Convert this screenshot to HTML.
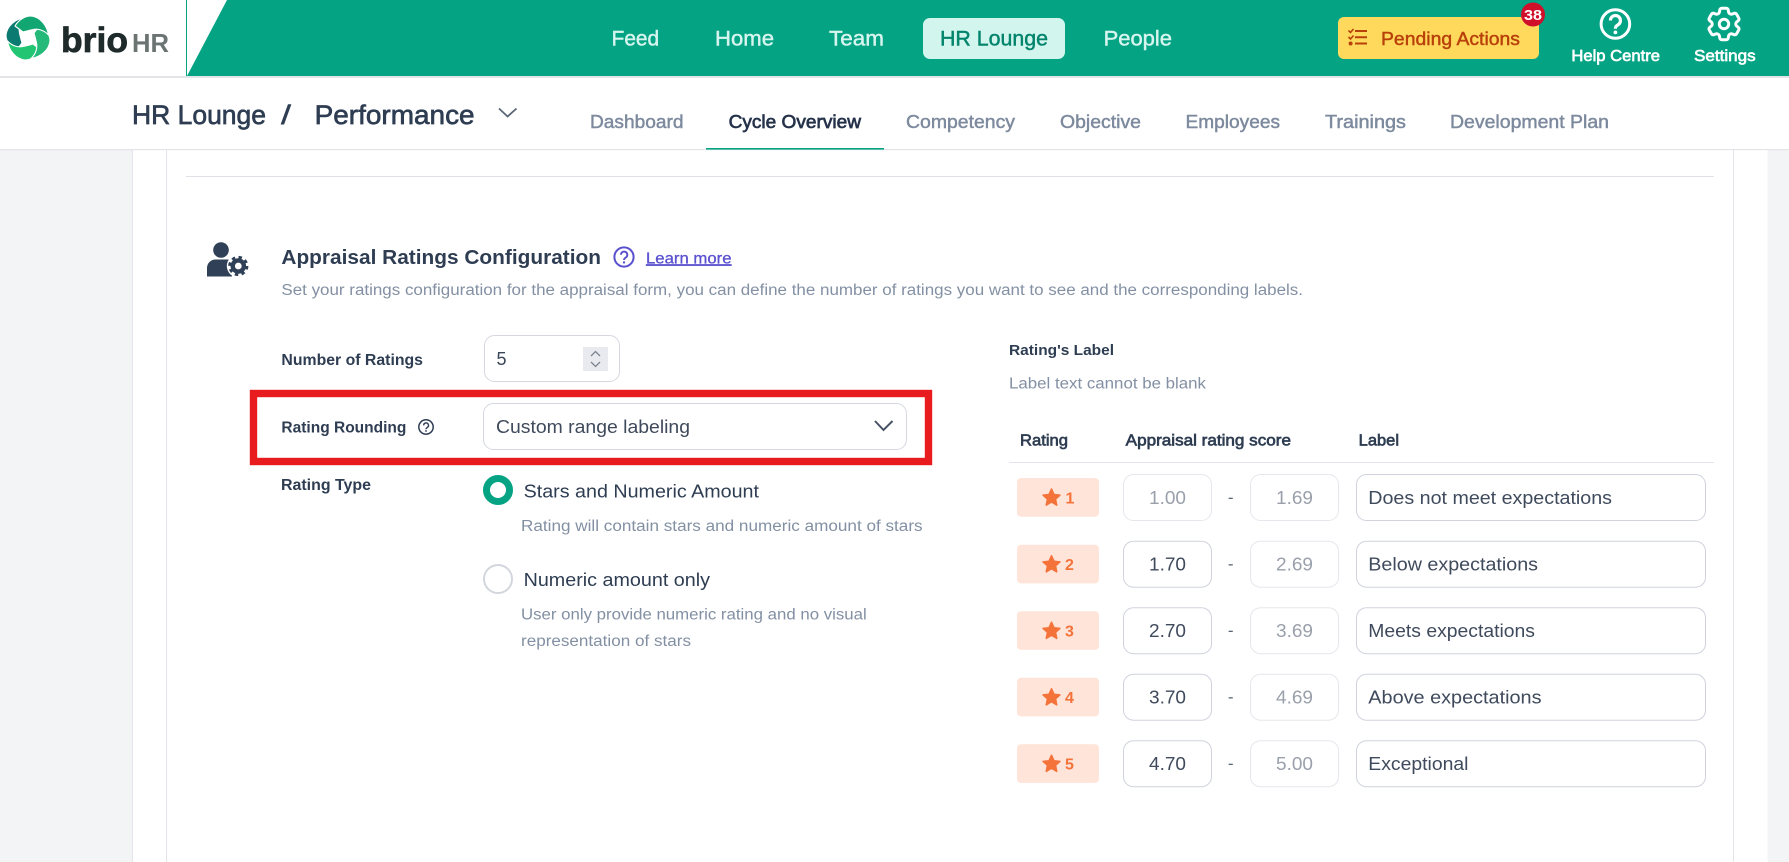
<!DOCTYPE html>
<html lang="en"><head><meta charset="utf-8"><title>HR Lounge - Performance</title>
<style>
html,body{margin:0;padding:0;background:#f3f4f6;width:1789px;height:862px;overflow:hidden}
svg{display:block;font-family:"Liberation Sans",Arial,sans-serif}
.m{stroke-width:.45px}
.b{stroke-width:.65px}
</style></head><body>
<svg xmlns="http://www.w3.org/2000/svg" width="1789" height="862" viewBox="0 0 1789 862">
<defs>
<polygon id="star" points="0,-8.4 2.5,-2.9 8.4,-2.3 4,1.6 5.2,7.6 0,4.5 -5.2,7.6 -4,1.6 -8.4,-2.3 -2.5,-2.9" fill="#f4733a" stroke="#f4733a" stroke-width="1.6" stroke-linejoin="round"/>
<path id="blade" d="M-5,-6L-13,-12C-9,-19 -2,-22 3,-22C12,-21 19,-13 20.5,-3C16,-8 10,-9.5 5,-8.5C1,-7.7 -3,-6.5 -5,-6Z" stroke="#fff" stroke-width="1.1" stroke-linejoin="round"/>
</defs>
<!-- page background -->
<rect width="1789" height="862" fill="#f3f4f6"/>
<rect x="133" y="150" width="1634.5" height="712" fill="#fff"/>
<path d="M132.5 150V862M166.5 150V862M1733.5 150V862" stroke="#e3e5ea" stroke-width="1" fill="none"/>
<!-- top bar -->
<rect width="1789" height="76" fill="#fff"/>
<polygon points="227,0 1789,0 1789,76 187,76" fill="#03a384"/>
<rect x="186" y="0" width="1" height="76" fill="#03a384"/>
<rect y="76" width="1789" height="2" fill="#e2e4e8"/>
<!-- logo -->
<g transform="translate(28 38)">
<use href="#blade" fill="#0b7a70" transform="rotate(270)"/>
<use href="#blade" fill="#22c672" transform="rotate(180)"/>
<use href="#blade" fill="#25b97a" transform="rotate(90)"/>
<use href="#blade" fill="#12a672"/>
</g>
<text x="61" y="52" font-size="35" font-weight="700" fill="#1f2a2a" stroke="#1f2a2a" stroke-width=".7" textLength="67" lengthAdjust="spacingAndGlyphs">brio</text>
<text x="132" y="52" font-size="26" font-weight="700" fill="#6b7472" textLength="37" lengthAdjust="spacingAndGlyphs">HR</text>
<!-- main nav -->
<g font-size="21.5" fill="#d6f5ee" stroke="#d6f5ee">
<text x="611.6" y="45.5" textLength="47.5" lengthAdjust="spacingAndGlyphs" class="m">Feed</text>
<text x="715" y="45.5" textLength="59" lengthAdjust="spacingAndGlyphs" class="m">Home</text>
<text x="829" y="45.5" textLength="55" lengthAdjust="spacingAndGlyphs" class="m">Team</text>
<text x="1103.6" y="45.5" textLength="68.4" lengthAdjust="spacingAndGlyphs" class="m">People</text>
</g>
<rect x="923" y="18" width="142" height="41" rx="7" fill="#d2f5ee"/>
<text x="940" y="45.5" font-size="21.5" fill="#03846c" stroke="#03846c" class="m" textLength="108" lengthAdjust="spacingAndGlyphs">HR Lounge</text>
<!-- pending -->
<rect x="1338" y="17" width="201" height="42" rx="6" fill="#ffd95c"/>
<g stroke="#b8400a" fill="none" stroke-width="2">
<path d="M1355 31H1367M1355 37.3H1367M1355 43.5H1367"/>
<path d="M1348.5 30.5l2 2 3-3.5M1348.5 37l2 2 3-3.5" stroke-width="1.6"/>
</g>
<circle cx="1350.6" cy="43.5" r="2" fill="#b8400a"/>
<text x="1381" y="45" font-size="18.5" fill="#b8400a" stroke="#b8400a" class="m" textLength="139" lengthAdjust="spacingAndGlyphs">Pending Actions</text>
<circle cx="1533" cy="14.5" r="12" fill="#d0102b"/>
<text x="1533" y="20" font-size="15" font-weight="700" fill="#fff" text-anchor="middle" textLength="18" lengthAdjust="spacingAndGlyphs">38</text>
<!-- help -->
<circle cx="1615.4" cy="24" r="14.3" fill="none" stroke="#fff" stroke-width="3"/>
<path d="M1610.4 20.5a5 5 0 1 1 7.9 4.1c-1.9 1.2-2.9 1.9-2.9 4.2" fill="none" stroke="#fff" stroke-width="3.2"/>
<circle cx="1615.4" cy="32.4" r="1.9" fill="#fff"/>
<text x="1571.4" y="61" font-size="16" fill="#fff" stroke="#fff" class="b" textLength="88.6" lengthAdjust="spacingAndGlyphs">Help Centre</text>
<!-- settings -->
<g transform="translate(1703 3) scale(1.75)" fill="none" stroke="#fff" stroke-width="1.7" stroke-linejoin="round" stroke-linecap="round">
<circle cx="12" cy="12" r="2.7"/>
<path d="M9.594 3.94c.09-.542.56-.94 1.11-.94h2.593c.55 0 1.02.398 1.11.94l.213 1.281c.063.374.313.686.645.87.074.04.147.083.22.127.325.196.72.257 1.075.124l1.217-.456a1.125 1.125 0 0 1 1.37.49l1.296 2.247a1.125 1.125 0 0 1-.26 1.431l-1.003.827c-.293.241-.438.613-.43.992a7.723 7.723 0 0 1 0 .255c-.008.378.137.75.43.991l1.004.827c.424.35.534.955.26 1.43l-1.298 2.247a1.125 1.125 0 0 1-1.369.491l-1.217-.456c-.355-.133-.75-.072-1.076.124a6.47 6.47 0 0 1-.22.128c-.331.183-.581.495-.644.869l-.213 1.281c-.09.543-.56.94-1.11.94h-2.594c-.55 0-1.019-.398-1.11-.94l-.213-1.281c-.062-.374-.312-.686-.644-.87a6.52 6.52 0 0 1-.22-.127c-.325-.196-.72-.257-1.076-.124l-1.217.456a1.125 1.125 0 0 1-1.369-.49l-1.297-2.247a1.125 1.125 0 0 1 .26-1.431l1.004-.827c.292-.24.437-.613.43-.991a6.932 6.932 0 0 1 0-.255c.007-.38-.138-.751-.43-.992l-1.004-.827a1.125 1.125 0 0 1-.26-1.43l1.297-2.247a1.125 1.125 0 0 1 1.37-.491l1.216.456c.356.133.751.072 1.076-.124.072-.044.146-.086.22-.128.332-.183.582-.495.644-.869l.214-1.28Z"/>
</g>
<text x="1694" y="61" font-size="16" fill="#fff" stroke="#fff" class="b" textLength="61.6" lengthAdjust="spacingAndGlyphs">Settings</text>
<!-- sub header -->
<rect y="78" width="1789" height="71" fill="#fff"/>
<rect y="149" width="1789" height="1.2" fill="#e2e4e8"/>
<g font-size="26.5" fill="#2e3d52" stroke="#2e3d52">
<text x="132" y="124" textLength="134" lengthAdjust="spacingAndGlyphs" class="b">HR Lounge</text>
<text x="281" y="124" textLength="10" lengthAdjust="spacingAndGlyphs" class="m">/</text>
<text x="314.6" y="124" textLength="160" lengthAdjust="spacingAndGlyphs" class="b">Performance</text>
</g>
<path d="M499 108.5L507.6 116.5L516.5 108.5" fill="none" stroke="#5d6878" stroke-width="1.8"/>
<g font-size="18" fill="#7d8a9e" stroke="#7d8a9e">
<text x="590" y="128" textLength="93.5" lengthAdjust="spacingAndGlyphs" class="m">Dashboard</text>
<text x="906" y="128" textLength="109" lengthAdjust="spacingAndGlyphs" class="m">Competency</text>
<text x="1060" y="128" textLength="81" lengthAdjust="spacingAndGlyphs" class="m">Objective</text>
<text x="1185.5" y="128" textLength="94.5" lengthAdjust="spacingAndGlyphs" class="m">Employees</text>
<text x="1325" y="128" textLength="81" lengthAdjust="spacingAndGlyphs" class="m">Trainings</text>
<text x="1450" y="128" textLength="159" lengthAdjust="spacingAndGlyphs" class="m">Development Plan</text>
</g>
<text x="728.6" y="128" font-size="18" fill="#25324a" stroke="#25324a" class="b" textLength="132.4" lengthAdjust="spacingAndGlyphs">Cycle Overview</text>
<rect x="706" y="148" width="178" height="1.6" fill="#03a384"/>
<!-- card divider -->
<rect x="186" y="176" width="1528" height="1" fill="#dfe1e6"/>
<!-- section icon -->
<circle cx="221" cy="250" r="7.8" fill="#2f4057"/>
<path d="M207 276.5V268c0-5 4-8.5 8.5-8.5h11c3 0 5 1 6.5 2.5L232 276.5Z" fill="#2f4057"/>
<circle cx="238.3" cy="266" r="11.5" fill="#fff"/>
<circle cx="238.3" cy="266" r="8.6" fill="none" stroke="#2f4057" stroke-width="3" stroke-dasharray="3.4 3.35"/>
<circle cx="238.3" cy="266" r="5.6" fill="none" stroke="#2f4057" stroke-width="4.4"/>
<!-- heading -->
<text x="281.4" y="264" font-size="20.5" font-weight="700" fill="#2e3d52" textLength="319.6" lengthAdjust="spacingAndGlyphs">Appraisal Ratings Configuration</text>
<circle cx="624" cy="257" r="9.6" fill="none" stroke="#5a50cf" stroke-width="2"/>
<path d="M620.9 254.8a3.2 3.2 0 1 1 4.9 2.7c-1.2.8-1.8 1.2-1.8 2.5" fill="none" stroke="#5a50cf" stroke-width="1.9"/>
<circle cx="624" cy="262.4" r="1.2" fill="#5a50cf"/>
<text x="646" y="263.3" font-size="15.5" fill="#5a50cf" stroke="#5a50cf" stroke-width=".3" text-decoration="underline" textLength="85.5" lengthAdjust="spacingAndGlyphs">Learn more</text>
<text x="281.4" y="295" font-size="15.5" fill="#8390a3" textLength="1021.6" lengthAdjust="spacingAndGlyphs">Set your ratings configuration for the appraisal form, you can define the number of ratings you want to see and the corresponding labels.</text>
<!-- left labels -->
<g font-size="15.5" font-weight="700" fill="#2e3d52">
<text x="281.4" y="365" textLength="141.6" lengthAdjust="spacingAndGlyphs">Number of Ratings</text>
<text x="281.4" y="432.3" textLength="125" lengthAdjust="spacingAndGlyphs">Rating Rounding</text>
<text x="281" y="490" textLength="90" lengthAdjust="spacingAndGlyphs">Rating Type</text>
</g>
<!-- number input -->
<rect x="484.5" y="335.5" width="135" height="46" rx="10" fill="#fff" stroke="#d5d8e0"/>
<text x="496.5" y="365" font-size="18" fill="#3c4658">5</text>
<rect x="583" y="347" width="25" height="24" fill="#e9eaef"/>
<path d="M591 356l4.5-4.5 4.5 4.5M591 362l4.5 4.5 4.5-4.5" fill="none" stroke="#7d8490" stroke-width="1.3"/>
<!-- red box -->
<rect x="253.5" y="393.5" width="675" height="68" fill="none" stroke="#e81c1f" stroke-width="7.4"/>
<!-- rating help -->
<circle cx="426" cy="427" r="7.2" fill="none" stroke="#2e3d52" stroke-width="1.5"/>
<path d="M423.7 425.4a2.4 2.4 0 1 1 3.6 2c-.9.6-1.3.9-1.3 1.8" fill="none" stroke="#2e3d52" stroke-width="1.4"/>
<circle cx="426" cy="431" r=".9" fill="#2e3d52"/>
<!-- select -->
<rect x="483.5" y="403.5" width="423" height="46" rx="10" fill="#fff" stroke="#d5d8e0"/>
<text x="496" y="433" font-size="18.5" fill="#3f4a5c" textLength="194" lengthAdjust="spacingAndGlyphs">Custom range labeling</text>
<path d="M875 421L883.5 430L892.5 421" fill="none" stroke="#465263" stroke-width="2"/>
<!-- radios -->
<circle cx="498" cy="490" r="11.5" fill="#fff" stroke="#03a384" stroke-width="7"/>
<text x="523.6" y="497.3" font-size="18" fill="#2e3d52" textLength="235.4" lengthAdjust="spacingAndGlyphs">Stars and Numeric Amount</text>
<text x="521" y="531" font-size="15.5" fill="#8390a3" textLength="401.6" lengthAdjust="spacingAndGlyphs">Rating will contain stars and numeric amount of stars</text>
<circle cx="498" cy="579" r="14" fill="#fff" stroke="#d3d6dd" stroke-width="2"/>
<text x="523.6" y="586" font-size="18" fill="#2e3d52" textLength="186.4" lengthAdjust="spacingAndGlyphs">Numeric amount only</text>
<text x="521" y="619.5" font-size="15.5" fill="#8390a3" textLength="345.7" lengthAdjust="spacingAndGlyphs">User only provide numeric rating and no visual</text>
<text x="521" y="646" font-size="15.5" fill="#8390a3" textLength="170" lengthAdjust="spacingAndGlyphs">representation of stars</text>
<!-- right column -->
<text x="1009" y="355" font-size="15" font-weight="700" fill="#2e3d52" textLength="105" lengthAdjust="spacingAndGlyphs">Rating's Label</text>
<text x="1009" y="388.3" font-size="15.5" fill="#8390a3" textLength="197" lengthAdjust="spacingAndGlyphs">Label text cannot be blank</text>
<g font-size="15.5" fill="#2e3d52" stroke="#2e3d52">
<text x="1020" y="445.3" textLength="48" lengthAdjust="spacingAndGlyphs" class="b">Rating</text>
<text x="1125.7" y="445.3" textLength="165.3" lengthAdjust="spacingAndGlyphs" class="b">Appraisal rating score</text>
<text x="1358.7" y="445.3" textLength="40.3" lengthAdjust="spacingAndGlyphs" class="b">Label</text>
</g>
<rect x="1009" y="462" width="705" height="1" fill="#e3e5ea"/>

<!-- row 1 -->
<g>
<rect x="1017" y="478" width="82" height="38.7" rx="4" fill="#ffe4d9"/>
<use href="#star" x="1051.5" y="497.5"/>
<text x="1065.5" y="503.5" font-size="16" font-weight="700" fill="#f4733a">1</text>
<rect x="1123.5" y="474.5" width="88" height="46" rx="10" fill="#fff" stroke="#e5e7ec"/>
<text x="1167.5" y="504" font-size="18" fill="#9aa0ab" text-anchor="middle" textLength="37" lengthAdjust="spacingAndGlyphs">1.00</text>
<text x="1230.7" y="503" font-size="17" fill="#5c6676" text-anchor="middle">-</text>
<rect x="1250.5" y="474.5" width="88" height="46" rx="10" fill="#fff" stroke="#e5e7ec"/>
<text x="1294.5" y="504" font-size="18" fill="#9aa0ab" text-anchor="middle" textLength="37" lengthAdjust="spacingAndGlyphs">1.69</text>
<rect x="1356.5" y="474.5" width="349" height="46" rx="10" fill="#fff" stroke="#d0d3dd"/>
<text x="1368.3" y="504" font-size="18" fill="#3f4a5c" textLength="243.7" lengthAdjust="spacingAndGlyphs">Does not meet expectations</text>
</g>
<!-- row 2 -->
<g transform="translate(0 66.7)">
<rect x="1017" y="478" width="82" height="38.7" rx="4" fill="#ffe4d9"/>
<use href="#star" x="1051.5" y="497.5"/>
<text x="1065" y="503.5" font-size="16" font-weight="700" fill="#f4733a">2</text>
<rect x="1123.5" y="474.5" width="88" height="46" rx="10" fill="#fff" stroke="#d0d3dd"/>
<text x="1167.5" y="504" font-size="18" fill="#3f4a5c" text-anchor="middle" textLength="37" lengthAdjust="spacingAndGlyphs">1.70</text>
<text x="1230.7" y="503" font-size="17" fill="#5c6676" text-anchor="middle">-</text>
<rect x="1250.5" y="474.5" width="88" height="46" rx="10" fill="#fff" stroke="#e5e7ec"/>
<text x="1294.5" y="504" font-size="18" fill="#9aa0ab" text-anchor="middle" textLength="37" lengthAdjust="spacingAndGlyphs">2.69</text>
<rect x="1356.5" y="474.5" width="349" height="46" rx="10" fill="#fff" stroke="#d0d3dd"/>
<text x="1368.3" y="504" font-size="18" fill="#3f4a5c" textLength="169.7" lengthAdjust="spacingAndGlyphs">Below expectations</text>
</g>
<!-- row 3 -->
<g transform="translate(0 133.2)">
<rect x="1017" y="478" width="82" height="38.7" rx="4" fill="#ffe4d9"/>
<use href="#star" x="1051.5" y="497.5"/>
<text x="1065" y="503.5" font-size="16" font-weight="700" fill="#f4733a">3</text>
<rect x="1123.5" y="474.5" width="88" height="46" rx="10" fill="#fff" stroke="#d0d3dd"/>
<text x="1167.5" y="504" font-size="18" fill="#3f4a5c" text-anchor="middle" textLength="37" lengthAdjust="spacingAndGlyphs">2.70</text>
<text x="1230.7" y="503" font-size="17" fill="#5c6676" text-anchor="middle">-</text>
<rect x="1250.5" y="474.5" width="88" height="46" rx="10" fill="#fff" stroke="#e5e7ec"/>
<text x="1294.5" y="504" font-size="18" fill="#9aa0ab" text-anchor="middle" textLength="37" lengthAdjust="spacingAndGlyphs">3.69</text>
<rect x="1356.5" y="474.5" width="349" height="46" rx="10" fill="#fff" stroke="#d0d3dd"/>
<text x="1368.3" y="504" font-size="18" fill="#3f4a5c" textLength="166.7" lengthAdjust="spacingAndGlyphs">Meets expectations</text>
</g>
<!-- row 4 -->
<g transform="translate(0 199.7)">
<rect x="1017" y="478" width="82" height="38.7" rx="4" fill="#ffe4d9"/>
<use href="#star" x="1051.5" y="497.5"/>
<text x="1065" y="503.5" font-size="16" font-weight="700" fill="#f4733a">4</text>
<rect x="1123.5" y="474.5" width="88" height="46" rx="10" fill="#fff" stroke="#d0d3dd"/>
<text x="1167.5" y="504" font-size="18" fill="#3f4a5c" text-anchor="middle" textLength="37" lengthAdjust="spacingAndGlyphs">3.70</text>
<text x="1230.7" y="503" font-size="17" fill="#5c6676" text-anchor="middle">-</text>
<rect x="1250.5" y="474.5" width="88" height="46" rx="10" fill="#fff" stroke="#e5e7ec"/>
<text x="1294.5" y="504" font-size="18" fill="#9aa0ab" text-anchor="middle" textLength="37" lengthAdjust="spacingAndGlyphs">4.69</text>
<rect x="1356.5" y="474.5" width="349" height="46" rx="10" fill="#fff" stroke="#d0d3dd"/>
<text x="1368.3" y="504" font-size="18" fill="#3f4a5c" textLength="173.2" lengthAdjust="spacingAndGlyphs">Above expectations</text>
</g>
<!-- row 5 -->
<g transform="translate(0 266.2)">
<rect x="1017" y="478" width="82" height="38.7" rx="4" fill="#ffe4d9"/>
<use href="#star" x="1051.5" y="497.5"/>
<text x="1065" y="503.5" font-size="16" font-weight="700" fill="#f4733a">5</text>
<rect x="1123.5" y="474.5" width="88" height="46" rx="10" fill="#fff" stroke="#d0d3dd"/>
<text x="1167.5" y="504" font-size="18" fill="#3f4a5c" text-anchor="middle" textLength="37" lengthAdjust="spacingAndGlyphs">4.70</text>
<text x="1230.7" y="503" font-size="17" fill="#5c6676" text-anchor="middle">-</text>
<rect x="1250.5" y="474.5" width="88" height="46" rx="10" fill="#fff" stroke="#e5e7ec"/>
<text x="1294.5" y="504" font-size="18" fill="#9aa0ab" text-anchor="middle" textLength="37" lengthAdjust="spacingAndGlyphs">5.00</text>
<rect x="1356.5" y="474.5" width="349" height="46" rx="10" fill="#fff" stroke="#d0d3dd"/>
<text x="1368.3" y="504" font-size="18" fill="#3f4a5c" textLength="100.2" lengthAdjust="spacingAndGlyphs">Exceptional</text>
</g>
</svg>
</body></html>
